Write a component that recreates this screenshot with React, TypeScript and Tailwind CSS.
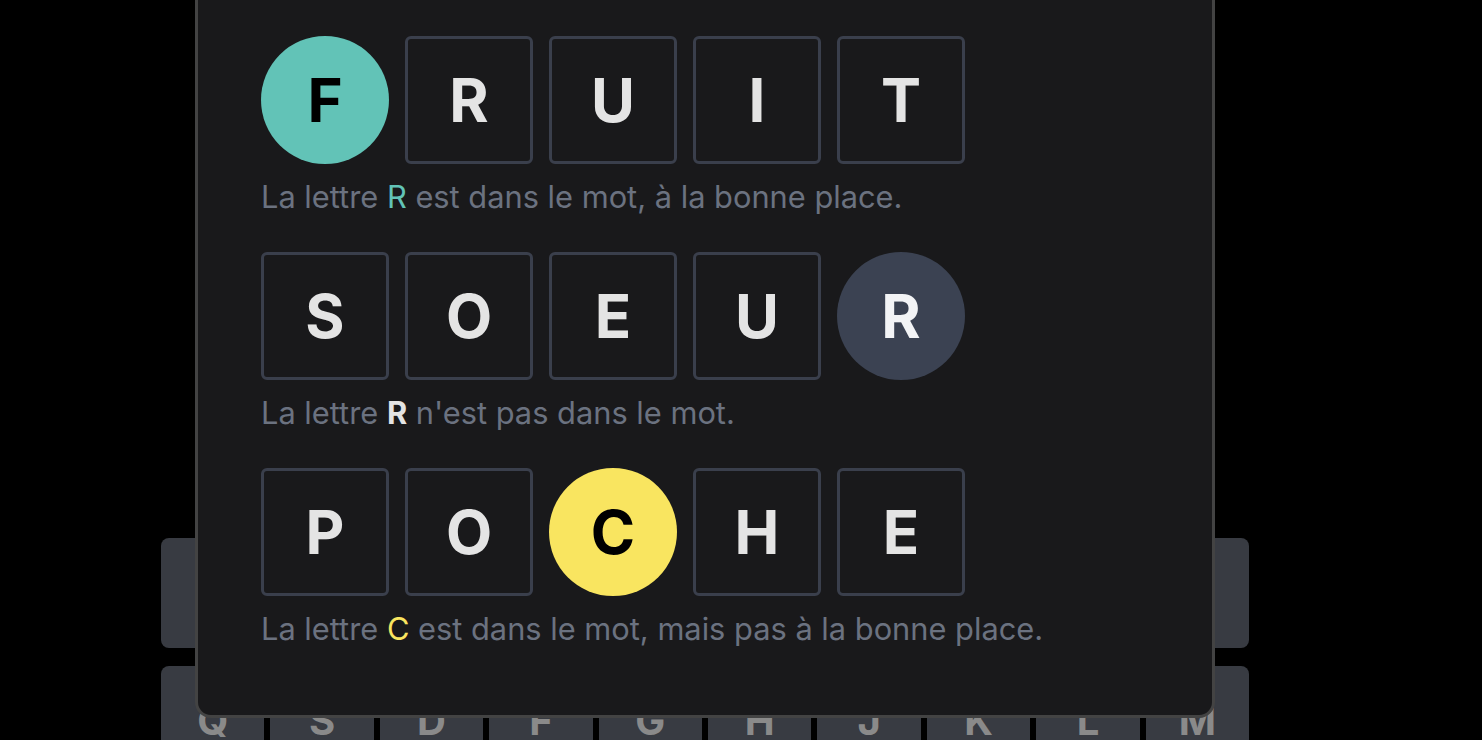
import React from 'react';

type Mark = 'correct' | 'absent' | 'present' | null;

const rows: { word: string; mark: number; kind: Mark; hint: string }[] = [
  { word: 'FRUIT', mark: 0, kind: 'correct', hint: 'R' },
  { word: 'SOEUR', mark: 4, kind: 'absent', hint: 'R' },
  { word: 'POCHE', mark: 2, kind: 'present', hint: 'C' },
];

const keyRows = ['AZERTYUIOP', 'QSDFGHJKLM'];

function Tile({ letter, kind }: { letter: string; kind: Mark }) {
  if (kind === 'correct') {
    return <div className="flex h-[128px] w-[128px] items-center justify-center rounded-full bg-[#62c3b7] text-[60px] font-bold text-black">{letter}</div>;
  }
  if (kind === 'present') {
    return <div className="flex h-[128px] w-[128px] items-center justify-center rounded-full bg-[#f9e560] text-[60px] font-bold text-black">{letter}</div>;
  }
  if (kind === 'absent') {
    return <div className="flex h-[128px] w-[128px] items-center justify-center rounded-full bg-[#3b4252] text-[60px] font-bold text-[#f3f4f6]">{letter}</div>;
  }
  return (
    <div className="flex h-[128px] w-[128px] items-center justify-center rounded-[6px] border-[3px] border-[#3a3f4c] text-[60px] font-bold text-[#e4e4e4]">
      {letter}
    </div>
  );
}

function Hint({ kind, letter }: { kind: Mark; letter: string }) {
  if (kind === 'correct') {
    return (
      <p>
        La lettre <span className="text-[#62c3b7]">{letter}</span> est dans le mot, à la bonne place.
      </p>
    );
  }
  if (kind === 'absent') {
    return (
      <p>
        La lettre <span className="font-bold text-[#e4e4e4]">{letter}</span> n'est pas dans le mot.
      </p>
    );
  }
  return (
    <p>
      La lettre <span className="text-[#f9e560]">{letter}</span> est dans le mot, mais pas à la bonne place.
    </p>
  );
}

export default function App() {
  return (
    <div className="relative h-[740px] w-[1482px] overflow-hidden bg-black" style={{ fontFamily: 'Inter, "Noto Sans", sans-serif' }}>
      {/* clavier derrière la modale */}
      <div className="ml-[161px] flex w-[1088px] flex-col gap-[18px] pt-[538px]">
        {keyRows.map((row) => (
          <div key={row} className="flex gap-[6px]">
            {row.split('').map((k) => (
              <div key={k} className="flex h-[110px] flex-1 items-center justify-center rounded-[8px] bg-[#383b42] text-[40px] font-bold text-[#8a8a8a]">
                {k}
              </div>
            ))}
          </div>
        ))}
      </div>

      {/* modale règles */}
      <div className="absolute left-[195px] top-[-40px] h-[758px] w-[1020px] rounded-[16px] border-[3px] border-[#434343] bg-[#19191b] pl-[63px] pt-[73px]">
        <div className="flex flex-col gap-[37px]">
          {rows.map((r) => (
            <div key={r.word}>
              <div className="flex gap-[16px]">
                {r.word.split('').map((l, i) => (
                  <Tile key={i} letter={l} kind={i === r.mark ? r.kind : null} />
                ))}
              </div>
              <div className="mt-[15px] text-[30.8px] leading-[36px] text-[#6b7280]">
                <Hint kind={r.kind} letter={r.hint} />
              </div>
            </div>
          ))}
        </div>
      </div>
    </div>
  );
}
